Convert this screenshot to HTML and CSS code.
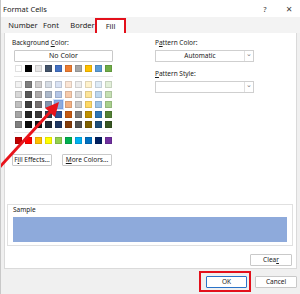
FILE: index.html
```html
<!DOCTYPE html>
<html>
<head>
    <meta charset="utf-8" />
    <title>Format Cells</title>
    <link rel="stylesheet" href="styles.css">
</head>
<body>
    <div class="dialog">
        <div class="titlebar">
            <span class="title">Format Cells</span>
            <span class="help">?</span>
            <span class="close">✕</span>
        </div>
        <div class="tabs">
            <span class="tab t-number">Number</span>
            <span class="tab t-font">Font</span>
            <span class="tab t-border">Border</span>
            <span class="tab active">Fill</span>
        </div>
        <div class="panel">
            <div class="columns">
                <div class="left">
                    <div class="label">Background <u>C</u>olor:</div>
                    <div class="btn nocolor">No Color</div>
                    <div class="swatches" id="theme"></div>
                    <div class="sep"></div>
                    <div class="grid" id="tints"></div>
                    <div class="sep"></div>
                    <div class="swatches" id="standard"></div>
                    <div class="btnrow">
                        <div class="btn effects">F<u>i</u>ll Effects...</div>
                        <div class="btn more"><u>M</u>ore Colors...</div>
                    </div>
                </div>
                <div class="right">
                    <div class="label">P<u>a</u>ttern Color:</div>
                    <div class="select"><span class="value">Automatic</span><span class="chev">&#8964;</span></div>
                    <div class="label"><u>P</u>attern Style:</div>
                    <div class="select"><span class="value"></span><span class="chev">&#8964;</span></div>
                </div>
            </div>
            <div class="sample">
                <div class="sample-label">Sample</div>
                <div class="sample-fill"></div>
            </div>
            <div class="clearrow">
                <div class="btn clear">Clea<u>r</u></div>
            </div>
        </div>
        <div class="footer">
            <div class="okwrap"><div class="btn ok">OK</div></div>
            <div class="btn cancel">Cancel</div>
        </div>
        <svg class="arrow" width="300" height="294" viewBox="0 0 300 294">
            <line x1="-4" y1="170" x2="51" y2="110" stroke="#e8141b" stroke-width="3" />
            <polygon points="58,102 44,108 54,117" fill="#e8141b" />
        </svg>
    </div>

    <script>
        const theme = ["#FFFFFF", "#000000", "#E7E6E6", "#44546A", "#4472C4", "#ED7D31", "#A5A5A5", "#FFC000", "#5B9BD5", "#70AD47"];
        const tints = [
            ["#F2F2F2", "#7F7F7F", "#D0CECE", "#D6DCE4", "#D9E2F3", "#FBE5D5", "#EDEDED", "#FFF2CC", "#DEEBF6", "#E2EFD9"],
            ["#D8D8D8", "#595959", "#AEABAB", "#ADB9CA", "#B4C6E7", "#F7CBAC", "#DBDBDB", "#FEE599", "#BDD7EE", "#C5E0B3"],
            ["#BFBFBF", "#3F3F3F", "#757070", "#8496B0", "#8EAADB", "#F4B183", "#C9C9C9", "#FFD965", "#9DC3E6", "#A8D08D"],
            ["#A5A5A5", "#262626", "#3A3838", "#323F4F", "#2F5496", "#C55A11", "#7B7B7B", "#BF9000", "#2E75B5", "#538135"],
            ["#7F7F7F", "#0C0C0C", "#171616", "#222A35", "#1F3864", "#833C0B", "#525252", "#7F6000", "#1E4E79", "#375623"]
        ];
        const standard = ["#C00000", "#FF0000", "#FFC000", "#FFFF00", "#92D050", "#00B050", "#00B0F0", "#0070C0", "#002060", "#7030A0"];

        function addSwatch(parent, color, selected) {
            let s = document.createElement("span");
            s.className = selected ? "swatch selected" : "swatch";
            s.style.backgroundColor = color;
            parent.appendChild(s);
        }

        theme.forEach(c => addSwatch(document.getElementById("theme"), c));
        tints.forEach((row, r) => row.forEach((c, i) => addSwatch(document.getElementById("tints"), c, r == 2 && i == 4)));
        standard.forEach(c => addSwatch(document.getElementById("standard"), c));
    </script>
</body>
</html>
```
FILE: styles.css
```css
* {
    box-sizing: border-box;
}

body {
    margin: 0;
    font-family: "Noto Sans", "DejaVu Sans", sans-serif;
    font-size: 6.5px;
    color: #1a1a1a;
    background: white;
}

u {
    text-decoration: underline;
}

.dialog {
    position: relative;
    width: 300px;
    height: 294px;
    display: flex;
    flex-direction: column;
    background: #f0f0f0;
    border-left: 1px solid #c8c8c8;
    overflow: hidden;
}

.titlebar {
    height: 17px;
    background: white;
    display: flex;
    align-items: center;
    padding: 0 0 0 2px;
    font-size: 7.5px;
}

.title {
    flex: 1;
}

.help {
    width: 26px;
    text-align: center;
    color: #333;
}

.close {
    width: 22px;
    text-align: center;
    color: #444;
    font-size: 8px;
}

.tabs {
    height: 16px;
    display: flex;
    align-items: flex-end;
    background: #f3f3f3;
    font-size: 7.5px;
    white-space: nowrap;
}

.tab {
    padding-bottom: 3px;
    line-height: 10px;
    text-align: center;
}

.t-number {
    margin-left: 4px;
    width: 36px;
}

.t-font {
    width: 20px;
}

.t-border {
    margin-left: 9px;
    width: 25px;
}

.tab.active {
    width: 31px;
    height: 15px;
    background: white;
    border: 2px solid #e3101b;
    border-bottom: none;
    padding: 1px 0 0 0;
}

.panel {
    flex: 1;
    margin: 0 3px 0 3px;
    background: white;
    border: 1px solid #dadada;
    border-top: none;
    padding: 5px 4px 0 3px;
}

.columns {
    display: flex;
    gap: 42px;
    padding-left: 4px;
}

.left {
    width: 101px;
}

.right {
    width: 99px;
}

.label {
    height: 11px;
    line-height: 10px;
    margin-bottom: 1px;
}

.btn {
    border: 1px solid #c9c9c9;
    background: white;
    text-align: center;
    border-radius: 1px;
    white-space: nowrap;
}

.nocolor {
    height: 12px;
    line-height: 10px;
    margin: 0 0 3px 2px;
    width: 99px;
    font-size: 7px;
}

.swatches, .grid {
    display: grid;
    grid-template-columns: repeat(10, 7px);
    column-gap: 3px;
    row-gap: 3px;
    padding-left: 3px;
}

.grid {
    margin-top: 1px;
}

.swatch {
    width: 7px;
    height: 7px;
    border: 1px solid rgba(0, 0, 0, 0.12);
}

.swatch.selected {
    width: 9px;
    height: 9px;
    margin: -1px;
    border: 1px solid #7a9fe0;
    box-shadow: 0 0 0 1px #cfe0fb;
}

.sep {
    margin: 4px 0 4px 2px;
    width: 99px;
    border-top: 1px solid #e6e6e6;
}

.btnrow {
    display: flex;
    gap: 10px;
    margin-top: 10px;
}

.effects, .more {
    height: 12px;
    line-height: 10px;
}

.effects {
    width: 40px;
}

.more {
    width: 50px;
}

.select {
    height: 12px;
    border: 1px solid #cfcfcf;
    display: flex;
    margin-bottom: 7px;
}

.select .value {
    flex: 1;
    text-align: center;
    line-height: 10px;
}

.select .chev {
    width: 9px;
    border-left: 1px solid #e0e0e0;
    text-align: center;
    line-height: 6px;
    color: #777;
    font-size: 7px;
}

.sample {
    margin: 38px 0 0 -1px;
    width: 286px;
    height: 42px;
    border: 1px solid #e0e0e0;
    padding: 1px 5px 0 5px;
}

.sample-label {
    height: 11px;
    line-height: 8px;
}

.sample-fill {
    height: 25px;
    background: #8eaadb;
}

.clearrow {
    display: flex;
    justify-content: flex-end;
    margin-top: 8px;
}

.clear {
    width: 42px;
    height: 12px;
    line-height: 10px;
}

.footer {
    height: 25px;
    display: flex;
    align-items: center;
    justify-content: flex-end;
    gap: 4px;
    padding-right: 3px;
    background: #f0f0f0;
}

.okwrap {
    border: 2px solid #e3101b;
    padding: 3px 2px 2px 5px;
}

.ok {
    width: 41px;
    height: 12px;
    line-height: 10px;
    border: 1px solid #2a73c8;
}

.cancel {
    width: 42px;
    height: 12px;
    line-height: 10px;
}

.arrow {
    position: absolute;
    left: 0;
    top: 0;
    pointer-events: none;
}
```
